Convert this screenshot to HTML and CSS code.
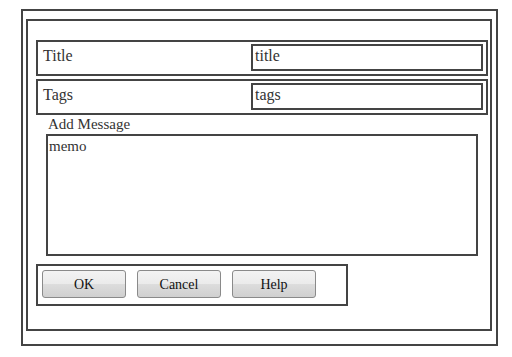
FILE: index.html
```html
<!DOCTYPE html>
<html>
<head>
<meta charset="utf-8">
<link rel="stylesheet" href="styles.css">
</head>
<body>
<div class="page">
  <div class="outer">
    <div class="inner">
      <div class="row row-first">
        <span class="row-label">Title</span>
        <input class="field" type="text" value="title">
      </div>
      <div class="row">
        <span class="row-label">Tags</span>
        <input class="field" type="text" value="tags">
      </div>
      <div class="msg-label">Add Message</div>
      <textarea class="memo">memo</textarea>
      <div class="buttons">
        <button class="btn" type="button">OK</button>
        <button class="btn" type="button">Cancel</button>
        <button class="btn" type="button">Help</button>
      </div>
    </div>
  </div>
</div>
</body>
</html>
```

FILE: styles.css
```css
* { box-sizing: border-box; }
html, body { margin: 0; background: #fff; }
body {
  font-family: "Liberation Serif", "Times New Roman", serif;
  color: #333;
}
.page { padding: 9px 0 0 21px; }
.outer {
  width: 477px;
  height: 337px;
  border: 2px solid #444;
  padding: 8px 4px 13px 3px;
}
.inner {
  height: 312px;
  border: 2px solid #444;
  padding: 19px 2px 0 8px;
  display: flex;
  flex-direction: column;
}
.row {
  height: 36px;
  border: 2px solid #444;
  display: flex;
  align-items: flex-start;
  flex: none;
}
.row-first { margin-bottom: 3px; }
.row-label {
  font-size: 16px;
  line-height: 18px;
  padding: 5px 0 0 5px;
}
.field {
  margin: 2px 3px 0 auto;
  width: 232px;
  height: 27px;
  border: 2px solid #444;
  border-radius: 0;
  padding: 0 2px 3px 2px;
  font-family: "Liberation Serif", "Times New Roman", serif;
  font-size: 16px;
  color: #333;
  background: #fff;
  outline: none;
}
.msg-label {
  font-size: 15px;
  line-height: 17px;
  margin: 1px 0 0 12px;
  height: 17px;
  flex: none;
}
.memo {
  display: block;
  flex: none;
  margin: 1px 0 0 10px;
  width: 432px;
  height: 122px;
  border: 2px solid #444;
  border-radius: 0;
  padding: 2px 1px 0 1px;
  font-family: "Liberation Serif", "Times New Roman", serif;
  font-size: 15px;
  line-height: 17px;
  color: #333;
  resize: none;
  outline: none;
  overflow: hidden;
}
.buttons {
  flex: none;
  margin-top: 8px;
  width: 312px;
  height: 42px;
  border: 2px solid #444;
  padding: 4px 0 0 4px;
  display: flex;
  gap: 11px;
  align-items: flex-start;
}
.btn {
  width: 84px;
  height: 28px;
  border: 1px solid #8a8a8a;
  border-radius: 3px;
  background: linear-gradient(#f3f3f3 0%, #ebebeb 48%, #dcdcdc 52%, #d0d0d0 100%);
  font-family: "Liberation Serif", "Times New Roman", serif;
  font-size: 14px;
  color: #111;
  padding: 2px 0 0 0;
  margin: 0;
}
```
